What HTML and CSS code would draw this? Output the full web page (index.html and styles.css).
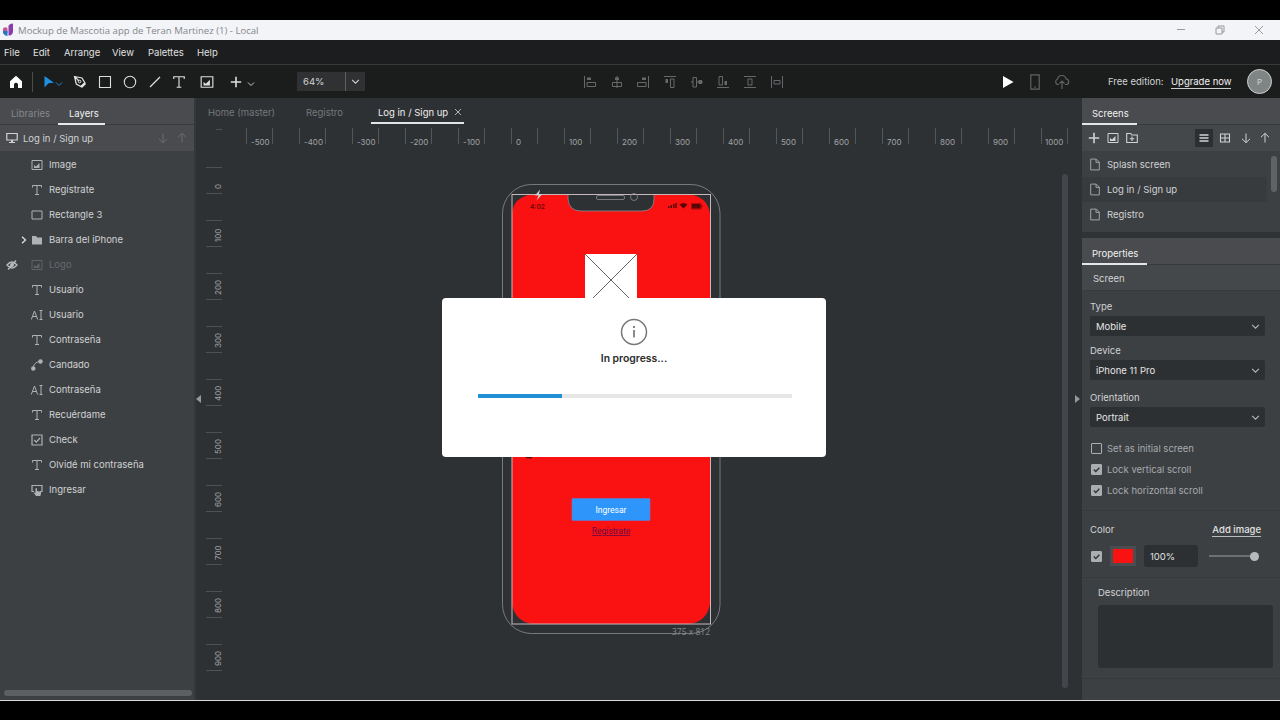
FILE: index.html
```
<!DOCTYPE html>
<html lang="en">
<head>
    <meta charset="UTF-8">
    <meta name="viewport" content="width=device-width, initial-scale=1.0">
    <title>Mockup de Mascotia app de Teran Martinez (1) - Local</title>
    <link rel="stylesheet" href="styles.css">
</head>
<body>
<svg class="sprite" aria-hidden="true">
    <symbol id="i-image" viewBox="0 0 12 12"><path d="M1 1.5h10v9H1z" fill="none" stroke="currentColor"/><path d="M3 9V6l2 1.5L8.500 4V9z" fill="currentColor"/></symbol>
    <symbol id="i-text" viewBox="0 0 12 12"><path d="M1.500 3.500V1.500h9v2M6 1.500v9M4 10.500h4" fill="none" stroke="currentColor"/></symbol>
    <symbol id="i-rect" viewBox="0 0 12 12"><path d="M1 2h10v8H1z" fill="none" stroke="currentColor"/></symbol>
    <symbol id="i-folder" viewBox="0 0 12 12"><path d="M1 2h4l1.200 1.500H11V10.500H1z" fill="currentColor"/></symbol>
    <symbol id="i-input" viewBox="0 0 12 12"><path d="M.3 10.500L3.500 2 6.700 10.500M1.500 7.500h4M8.500 1.500h3M10 1.500v9M8.500 10.500h3" fill="none" stroke="currentColor"/></symbol>
    <symbol id="i-path" viewBox="0 0 12 12"><path d="M2.500 9C2.500 5 5 3 9 2.500" fill="none" stroke="currentColor"/><circle cx="2.300" cy="9.500" r="2.200" fill="currentColor"/><circle cx="9.500" cy="2.500" r="2.200" fill="currentColor"/></symbol>
    <symbol id="i-check" viewBox="0 0 12 12"><path d="M1 1h10v10H1zM3.300 6l2 2.200L9 4" fill="none" stroke="currentColor" stroke-width="1.200"/></symbol>
    <symbol id="i-button" viewBox="0 0 12 12"><path d="M3 7.500H1v-6h10v6H9" fill="none" stroke="currentColor" stroke-width="1.200"/><path d="M4.500 4.500q1-1 1.500 0V7l4 .8v2L9.300 12H5L2.500 8.500l2 .3z" fill="currentColor"/></symbol>
    <symbol id="i-down" viewBox="0 0 12 12"><path d="M6 1.500v9M2 6.800l4 3.900 4-3.900" fill="none" stroke="currentColor"/></symbol>
    <symbol id="i-up" viewBox="0 0 12 12"><path d="M6 10.500v-9M2 5.200l4-3.900 4 3.900" fill="none" stroke="currentColor"/></symbol>
    <symbol id="i-chevron" viewBox="0 0 8 8"><path d="M1 2.500l3 3 3-3" fill="none" stroke="currentColor" stroke-width=".9"/></symbol>
    <symbol id="i-plus" viewBox="0 0 12 12"><path d="M6 .8v10.400M.8 6h10.400" fill="none" stroke="currentColor" stroke-width="1.600"/></symbol>
    <symbol id="i-page" viewBox="0 0 12 12"><path d="M1.700.6h5.600l3 3v7.800H1.700zM7 .6v3.300h3.300" fill="none" stroke="currentColor"/></symbol>
    <symbol id="i-close" viewBox="0 0 8 8"><path d="M1 1l6 6M7 1L1 7" fill="none" stroke="currentColor"/></symbol>
</svg>

<div class="app">
    <header class="titlebar">
        <svg class="logo" viewBox="0 0 12 14"><path d="M6.500 2.500Q8 .5 11 .5V9q-1 4-4.500 3.500z" fill="#8a3cae"/><path d="M1 5.500q3-2.500 4.500 0V10H1z" fill="#c05a8c"/><path d="M1 8h4.500v5Q1 12 1 9z" fill="#2476c4"/></svg>
        <span class="window-title">Mockup de Mascotia app de Teran Martinez (1) - Local</span>
        <div class="window-buttons">
            <svg viewBox="0 0 10 10"><path d="M1 4.500h8"/></svg>
            <svg viewBox="0 0 10 10"><path d="M1 3h6v6H1zM3 3V1h6v6H7"/></svg>
            <svg viewBox="0 0 10 10"><path d="M1 1l8 8M9 1L1 9"/></svg>
        </div>
    </header>

    <nav class="menubar">
        <span class="m-file">File</span><span class="m-edit">Edit</span><span class="m-arrange">Arrange</span><span class="m-view">View</span><span class="m-palettes">Palettes</span><span class="m-help">Help</span>
    </nav>

    <div class="toolbar">
        <div class="tools">
            <svg class="tool home" viewBox="0 0 14 14"><path d="M7 .8l6 5.400V13H9V9Q7 6.500 5 9v4H1V6.200z" fill="#fff"/></svg>
            <i class="separator"></i>
            <svg class="tool pointer" viewBox="0 0 12 14"><path d="M1.500 1L11 7.800 5.500 8.300 1.500 12.500z" fill="#1e90e0"/></svg>
            <svg class="caret blue"><use href="#i-chevron"/></svg>
            <svg class="tool pen" viewBox="0 0 14 14"><path d="M1.500 1.500L9 3l2.800 4.700-4 3.800L3.300 9zM1.500 1.500L6 6M12.700 8.500l-4.200 4" fill="none" stroke="#e4e4e4" stroke-width="1.200"/><circle cx="6.600" cy="6.500" r="1.300" fill="none" stroke="#e4e4e4"/></svg>
            <svg class="tool square" viewBox="0 0 14 14"><path d="M1.500 1.500h11v11h-11z" fill="none" stroke="#ddd" stroke-width="1.100"/></svg>
            <svg class="tool circle" viewBox="0 0 14 14"><circle cx="7" cy="7" r="5.700" fill="none" stroke="#ddd" stroke-width="1.100"/></svg>
            <svg class="tool line" viewBox="0 0 14 14"><path d="M2 12L12 2" stroke="#ddd" stroke-width="1.200"/></svg>
            <svg class="tool type"><use href="#i-text"/></svg>
            <svg class="tool picture"><use href="#i-image"/></svg>
            <svg class="tool add"><use href="#i-plus"/></svg>
            <svg class="caret"><use href="#i-chevron"/></svg>
        </div>
        <div class="zoom"><span>64%</span><b><svg><use href="#i-chevron"/></svg></b></div>
        <div class="align">
            <svg viewBox="0 0 14 14"><path d="M1.500 1v12M4 7.500h8.500v4H4z"/><path class="solid" d="M4 2.500h4v2.500H4z"/></svg>
            <svg viewBox="0 0 14 14"><path d="M7 1v12M2.500 7.500h9v4h-9z"/><path class="solid" d="M5 2.500h4v2.500H5z"/></svg>
            <svg viewBox="0 0 14 14"><path d="M12.500 1v12M1.500 7.500H10v4H1.500z"/><path class="solid" d="M6 2.500h4v2.500H6z"/></svg>
            <svg viewBox="0 0 14 14"><path d="M1 1.500h12M7.500 4h3.500v8.500H7.500z"/><path class="solid" d="M2.500 4H5v4H2.500z"/></svg>
            <svg viewBox="0 0 14 14"><path d="M1 7h2M6.500 7h6.500M3 2.500h3.500v9.500H3z"/><path class="solid" d="M8.500 5H12v4H8.500z"/></svg>
            <svg viewBox="0 0 14 14"><path d="M1 12.500h12M3 1.500h3.500V10H3z"/><path class="solid" d="M8.500 6H11v4H8.500z"/></svg>
            <svg viewBox="0 0 14 14"><path d="M1 1.500h12M1 12.500h12M5 4h4v6H5z"/></svg>
            <svg viewBox="0 0 14 14"><path d="M1.500 1v12M12.500 1v12M4 5.500h6v3.500H4z"/></svg>
        </div>
        <div class="actions">
            <svg class="play" viewBox="0 0 12 14"><path d="M1 1l10.500 6L1 13z" fill="#fff"/></svg>
            <svg class="device" viewBox="0 0 10 16"><path d="M.8.8h8.400v14.400H.8zM4 13h2" /></svg>
            <svg class="cloud" viewBox="0 0 16 16"><path d="M5 10.500H3.500a3 3 0 0 1 0-5.500C4.500.5 11 .3 12 4.800a2.900 2.900 0 0 1 .5 5.700H11M8 15V7M5.500 9.500L8 7l2.500 2.500"/></svg>
            <span class="edition">Free edition:</span>
            <a class="upgrade">Upgrade now</a>
            <span class="avatar">P</span>
        </div>
    </div>

    <main class="workspace">
        <aside class="layers">
            <div class="tabs">
                <span class="tab-lib">Libraries</span>
                <span class="tab-layers active">Layers</span>
            </div>
            <div class="layers-head">
                <svg class="monitor" viewBox="0 0 12 12"><path d="M.8 1.500h10.400v6.500H.8z" fill="none" stroke="currentColor" stroke-width="1.200"/><path d="M5 8h2v2h2v1H3v-1h2z" fill="currentColor"/></svg>
                <span>Log in / Sign up</span>
                <svg class="order"><use href="#i-down"/></svg>
                <svg class="order"><use href="#i-up"/></svg>
            </div>
            <ul class="layer-list">
                <li><svg><use href="#i-image"/></svg>Image</li>
                <li><svg><use href="#i-text"/></svg>Regístrate</li>
                <li><svg><use href="#i-rect"/></svg>Rectangle 3</li>
                <li class="group"><svg class="expand" viewBox="0 0 8 8"><path d="M2 .8l3.500 3.200L2 7.200" fill="none" stroke="#ddd" stroke-width="1.300"/></svg><svg><use href="#i-folder"/></svg>Barra del iPhone</li>
                <li class="hidden-layer"><svg class="eye" viewBox="0 0 12 12"><path d="M1 6q5-6 10 0-5 6-10 0zM2 10.500l8-9" fill="none" stroke="currentColor" stroke-width="1.300"/><circle cx="6" cy="6" r="2" fill="currentColor"/></svg><svg><use href="#i-image"/></svg>Logo</li>
                <li><svg><use href="#i-text"/></svg>Usuario</li>
                <li><svg><use href="#i-input"/></svg>Usuario</li>
                <li><svg><use href="#i-text"/></svg>Contraseña</li>
                <li><svg><use href="#i-path"/></svg>Candado</li>
                <li><svg><use href="#i-input"/></svg>Contraseña</li>
                <li><svg><use href="#i-text"/></svg>Recuérdame</li>
                <li><svg><use href="#i-check"/></svg>Check</li>
                <li><svg><use href="#i-text"/></svg>Olvidé mi contraseña</li>
                <li><svg><use href="#i-button"/></svg>Ingresar</li>
            </ul>
            <div class="h-scroll"></div>
        </aside>

        <section class="editor">
            <div class="screen-tabs">
                <span class="st-home">Home (master)</span>
                <span class="st-registro">Registro</span>
                <span class="st-login">Log in / Sign up <svg><use href="#i-close"/></svg></span>
            </div>
            <div class="ruler-x">
                <span>-500</span><span>-400</span><span>-300</span><span>-200</span><span>-100</span><span>0</span><span>100</span><span>200</span><span>300</span><span>400</span><span>500</span><span>600</span><span>700</span><span>800</span><span>900</span><span>1000</span>
            </div>
            <div class="ruler-y">
                <span>0</span><span>100</span><span>200</span><span>300</span><span>400</span><span>500</span><span>600</span><span>700</span><span>800</span><span>900</span>
            </div>
            <i class="fold fold-left"></i>
            <i class="fold fold-right"></i>
            <i class="v-scroll"></i>

            <svg class="phone" width="220" height="456" viewBox="0 0 220 456">
                <rect class="bezel" x=".5" y=".5" width="217.500" height="449" rx="29"/>
                <path class="screen" d="M10 30Q11 13 31 10H66V15Q67 27 79 27H140Q152 27 152 15V10H187Q206 13 208 30V420Q205 437 188 440H30Q13 437 10 420z"/>
                <path class="bezel" d="M66 10V15Q67 27 79 27H140Q152 27 152 15V10"/>
                <rect class="frame" x="10" y="10.500" width="198.500" height="429.500"/>
                <rect class="bezel" x="94.500" y="11.500" width="28" height="4" rx="1.500"/>
                <circle class="bezel" cx="132" cy="13" r="3.500"/>
                <path d="M38 5.500l-5 6h3.500l-2 5 6-6.500h-3.500z" fill="#c9d0d0"/>
                <text class="clock" x="28" y="25">4:02</text>
                <path d="M166 24v-2h1.500v2zM168.500 24v-3h1.500v3zM171 24v-4h1.500v4zM173.300 24v-5h1.500v5zM181.500 24.500l-4-4q4-3 8 0zM190 20h8.500v4.500H190zM199.300 21.300h1v2h-1z" fill="#5a0505"/>
                <path d="M189.500 19.500h9.500v5.500h-9.500z" fill="none" stroke="#7a0808" stroke-width=".6"/>
                <path d="M83 70h52v60H83z" fill="#fff"/>
                <path d="M83 70l52 52M135 70l-52 52" stroke="#666" stroke-width="1"/>
                <path d="M24 272h6v2.300h-6z" fill="#5a0505"/>
                <rect x="70" y="314.500" width="78" height="22" rx="1" fill="#2e96fb" stroke="#6080d8" stroke-width=".6"/>
                <text class="enter" x="109" y="329">Ingresar</text>
                <text class="register" x="109" y="350">Regístrate</text>
                <text class="dims" x="208" y="451">375 x 812</text>
            </svg>
        </section>

        <aside class="side">
            <div class="tabs"><span class="tab-screens active">Screens</span></div>
            <div class="screen-tools">
                <svg><use href="#i-plus"/></svg>
                <svg><use href="#i-image"/></svg>
                <svg viewBox="0 0 12 12"><path d="M.7 1.500h4l1.200 1.500h5.400v7.500H.7zM6 4.500v4.500M3.800 6.700h4.400" fill="none" stroke="currentColor" stroke-width="1.100"/></svg>
                <span class="list-view"><svg viewBox="0 0 12 12"><path d="M1.500 3h9M1.500 6h9M1.500 9h9" stroke="currentColor" stroke-width="1.300"/></svg></span>
                <svg class="grid-view" viewBox="0 0 12 12"><path d="M1.500 2h9v8h-9zM6 2v8M1.500 6h9" fill="none" stroke="currentColor" stroke-width="1.100"/></svg>
                <svg class="sort"><use href="#i-down"/></svg>
                <svg><use href="#i-up"/></svg>
            </div>
            <div class="screens">
                <ul>
                    <li><svg><use href="#i-page"/></svg>Splash screen</li>
                    <li class="selected"><svg><use href="#i-page"/></svg>Log in / Sign up</li>
                    <li><svg><use href="#i-page"/></svg>Registro</li>
                </ul>
                <i class="thumb"></i>
            </div>

            <div class="tabs props-tabs"><span class="tab-props active">Properties</span></div>
            <div class="props-head">Screen</div>
            <div class="props">
                <label>Type</label>
                <div class="select">Mobile<svg><use href="#i-chevron"/></svg></div>
                <label>Device</label>
                <div class="select">iPhone 11 Pro<svg><use href="#i-chevron"/></svg></div>
                <label class="spaced">Orientation</label>
                <div class="select">Portrait<svg><use href="#i-chevron"/></svg></div>
                <div class="checks">
                    <div><i class="box"></i>Set as initial screen</div>
                    <div><i class="box on"><svg viewBox="0 0 10 10"><path d="M2 5l2.200 2.300L8.200 3"/></svg></i>Lock vertical scroll</div>
                    <div><i class="box on"><svg viewBox="0 0 10 10"><path d="M2 5l2.200 2.300L8.200 3"/></svg></i>Lock horizontal scroll</div>
                </div>
            </div>
            <div class="color">
                <div class="color-head"><span>Color</span><a>Add image</a></div>
                <div class="color-row">
                    <i class="box on"><svg viewBox="0 0 10 10"><path d="M2 5l2.200 2.300L8.200 3"/></svg></i>
                    <i class="swatch"></i>
                    <span class="opacity">100%</span>
                    <span class="slider"><i></i></span>
                </div>
            </div>
            <div class="description">
                <label>Description</label>
                <div class="textarea"></div>
            </div>
        </aside>
    </main>

    <div class="dialog">
        <svg class="info" viewBox="0 0 28 28"><circle cx="14" cy="14" r="12.500" fill="none" stroke="#777" stroke-width="1.500"/><path d="M14 12v7.500" stroke="#666" stroke-width="1.500"/><circle cx="14" cy="9" r="1.100" fill="#666"/></svg>
        <p>In progress...</p>
        <div class="progress"><div class="bar"></div></div>
    </div>
</div>
</body>
</html>
```
FILE: styles.css
```
:root {
    --panel: #3d4043;
    --panel-head: #494b4f;
    --canvas: #2e3134;
    --field: #2d3032;
    --text: #d0d2d3;
    --line: #37393c;
}

* {
    margin: 0;
    padding: 0;
    box-sizing: border-box;
}

body {
    background: #000;
    color: var(--text);
    font-family: Inter, "Liberation Sans", sans-serif;
    font-size: 9.5px;
    overflow: hidden;
    padding-top: 20px;
    height: 720px;
}

ul {
    list-style: none;
}

svg {
    display: block;
    flex: none;
}

.sprite {
    display: none;
}

.app {
    height: 681px;
    position: relative;
    display: flex;
    flex-direction: column;
    border-bottom: 1px solid #d9dcdc;
    white-space: nowrap;
}

/* window chrome */
.titlebar {
    height: 20px;
    display: flex;
    align-items: center;
    background: #f3f4f8;
    color: #85878b;
    padding: 0 16px 0 2px;
}

.logo {
    width: 12px;
    height: 14px;
    margin-right: 4px;
}

.window-title {
    font: 9.6px "Open Sans", sans-serif;
}

.window-buttons {
    margin-left: auto;
    display: flex;
    gap: 29px;
}

.window-buttons svg {
    width: 10px;
    height: 10px;
    fill: none;
    stroke: #8c8e91;
    stroke-width: .9;
}

.menubar {
    height: 25px;
    display: flex;
    align-items: center;
    background: #1c1d1e;
    border-bottom: 1px solid #37383a;
    padding: 1px 0 0 4px;
    color: #e0e0e0;
}

.m-file { width: 29px; }
.m-edit { width: 31px; }
.m-arrange { width: 48px; }
.m-view { width: 36px; }
.m-palettes { width: 49px; }

.toolbar {
    height: 33px;
    display: flex;
    align-items: center;
    background: #1b1c1c;
}

.tools {
    display: flex;
    align-items: center;
    width: 297px;
    padding-left: 9px;
    color: #ddd;
}

.tool {
    width: 14px;
    height: 14px;
}

.separator {
    width: 1px;
    height: 20px;
    background: #4b4c4d;
    margin: 0 10px 0 9px;
}

.pointer { width: 12px; }

.caret {
    width: 8px;
    height: 8px;
    margin-top: 5px;
}

.caret.blue { color: #1e90e0; }

.pen { margin-left: 10px; }
.square { margin-left: 11px; }
.circle { margin-left: 11px; }
.line { margin-left: 11px; }
.type { margin-left: 10px; }
.picture { margin-left: 14px; }
.add { width: 12px; margin: 0 5px 0 16px; }

.zoom {
    display: flex;
    width: 68px;
    height: 19px;
    background: #2f3133;
    align-items: center;
    color: #d5d5d5;
}

.zoom span {
    width: 48px;
    padding-left: 6px;
}

.zoom b {
    display: flex;
    width: 20px;
    height: 19px;
    align-items: center;
    justify-content: center;
    border-left: 1px solid #5d5f60;
}

.zoom svg {
    width: 9px;
    height: 9px;
}

.align {
    display: flex;
    gap: 12.700px;
    margin-left: 218px;
}

.align svg {
    width: 14px;
    height: 14px;
    fill: none;
    stroke: #66686a;
    stroke-width: 1;
}

.align .solid {
    fill: #66686a;
    stroke: none;
}

.actions {
    display: flex;
    align-items: center;
    margin-left: auto;
    padding-right: 8px;
}

.play {
    width: 12px;
    height: 14px;
}

.device, .cloud {
    fill: none;
    stroke: #606264;
    stroke-width: 1.200;
}

.device {
    width: 10px;
    height: 16px;
    margin-left: 16px;
}

.cloud {
    width: 16px;
    height: 16px;
    margin-left: 14px;
}

.edition {
    width: 63px;
    margin-left: 38px;
}

.upgrade {
    color: #f3f3f3;
    width: 60px;
    border-bottom: 1px solid #ccc;
    line-height: 13px;
    padding-top: 1px;
}

.avatar {
    display: flex;
    align-items: center;
    justify-content: center;
    width: 25px;
    height: 25px;
    margin-left: 16px;
    border: 1px solid #cfd1d1;
    border-radius: 50%;
    background: #7f8484;
    font-size: 8px;
}

.workspace {
    flex: 1;
    display: flex;
    min-height: 0;
}

/* panels */
.tabs {
    height: 27px;
    display: flex;
    background: var(--panel-head);
    border-bottom: 1px solid var(--line);
    color: #85888b;
}

.tabs span {
    height: 27px;
    line-height: 32px;
}

.tabs .active {
    color: #f2f2f2;
    border-bottom: 2px solid #e4e7e9;
}

.layers {
    width: 196px;
    background: var(--panel);
    border-right: 2px solid #35383b;
    display: flex;
    flex-direction: column;
}

.tab-lib { width: 58px; padding-left: 11px; }
.tab-layers { width: 47px; padding-left: 11px; }
.tab-screens { width: 55px; padding-left: 10px; }
.tab-props { width: 65px; padding-left: 10px; }

.layers-head {
    height: 26px;
    display: flex;
    align-items: center;
    background: var(--panel-head);
    padding: 0 6px;
}

.layers-head span {
    flex: 1;
    padding-left: 5px;
}

.monitor, .order {
    width: 12px;
    height: 12px;
}

.order {
    color: #6b6e71;
    margin-left: 7px;
}

.layer-list li {
    height: 25px;
    display: flex;
    align-items: center;
    padding: 2px 0 0 31px;
}

.layer-list svg {
    width: 12px;
    height: 12px;
    margin-right: 6px;
    color: #aeb2b3;
}

.layer-list .group { padding-left: 20px; }

.layer-list .expand {
    width: 8px;
    height: 8px;
    margin-right: 3px;
}

.layer-list .hidden-layer {
    padding-left: 6px;
    color: #66696c;
}

.layer-list .hidden-layer svg { color: #606366; }

.layer-list .hidden-layer .eye {
    margin-right: 13px;
    color: #b9bcbd;
}

.h-scroll {
    height: 6px;
    border-radius: 3px;
    background: #5d6063;
    margin: auto 2px 4px 4px;
}

.editor {
    flex: 1;
    position: relative;
    background: var(--canvas);
}

.screen-tabs {
    height: 26px;
    display: flex;
    color: #75787b;
    line-height: 29px;
    padding-left: 12px;
}

.st-home { width: 98px; }
.st-registro { width: 65px; }

.st-login {
    width: 93px;
    padding: 4px 0 0 7px;
    color: #efefef;
    border-bottom: 2px solid #e2e4e5;
    display: flex;
    align-items: center;
}

.st-login svg {
    width: 8px;
    height: 8px;
    margin-left: 6px;
    color: #b0b3b5;
}

/* one span covers 100 units: a labelled tick and a half-way tick */
.ruler-x {
    height: 20px;
    margin: 4px 0 0 50px;
    display: flex;
    font-size: 8px;
    color: #a0a3a5;
}

.ruler-x span {
    width: 53px;
    height: 20px;
    padding: 9px 0 0 5px;
    background: linear-gradient(#53575a, #53575a) 0 0 / 1px 16px no-repeat,
                linear-gradient(#53575a, #53575a) 26px 0 / 1px 16px no-repeat;
}

.ruler-x span:last-child {
    width: 28px;
    padding-left: 4px;
}

.ruler-y {
    width: 16px;
    margin: -19px 0 0 10px;
    padding-top: 12px;
    display: flex;
    flex-direction: column;
    font-size: 8px;
    color: #a0a3a5;
    background: linear-gradient(#4e5255, #4e5255) 100% 0 / 6px 1px no-repeat;
}

.ruler-y span {
    height: 53px;
    width: 16px;
    writing-mode: vertical-lr;
    transform: rotate(180deg);
    padding-top: 5px;
    line-height: 8px;
    background: linear-gradient(#4e5255, #4e5255) 0 0 / 16px 1px no-repeat,
                linear-gradient(#4e5255, #4e5255) 0 26px / 16px 1px no-repeat;
}

.fold {
    position: absolute;
    top: 297px;
    border: 4px solid transparent;
}

.fold-left {
    left: -4px;
    border-right: 5px solid #94999b;
}

.fold-right {
    right: 2px;
    border-left: 5px solid #94999b;
    border-right: 0;
}

.v-scroll {
    position: absolute;
    top: 76px;
    right: 14px;
    width: 6px;
    height: 514px;
    border-radius: 3px;
    background: #42464a;
}

/* device on the canvas */
.phone {
    position: absolute;
    left: 306px;
    top: 86px;
}

.bezel {
    fill: none;
    stroke: #888d90;
    stroke-width: .8;
}

.screen { fill: #fa1111; }

.frame {
    fill: none;
    stroke: #c8b9b9;
    stroke-width: 1;
}

.clock {
    font-size: 6.5px;
    font-weight: 600;
    fill: #6c0808;
}

.enter, .register {
    font-family: Roboto, sans-serif;
    font-size: 8.500px;
    text-anchor: middle;
    fill: #fff;
}

.register {
    fill: #6b0a45;
    text-decoration: underline;
}

.dims {
    font: 8.5px "Open Sans", sans-serif;
    text-anchor: end;
    fill: #85898c;
}

/* right column */
.side {
    width: 198px;
    background: var(--panel);
    display: flex;
    flex-direction: column;
}

.screen-tools {
    height: 26px;
    display: flex;
    align-items: center;
    background: #45484b;
    padding: 0 9px 0 6px;
    gap: 7px;
}

.screen-tools svg {
    width: 12px;
    height: 12px;
}

.list-view {
    width: 18px;
    height: 18px;
    display: flex;
    align-items: center;
    justify-content: center;
    background: #2c2f32;
    margin-left: auto;
}

.grid-view { margin-left: -1px; }
.screen-tools .sort { margin-left: 2px; }

.screens {
    height: 87px;
    display: flex;
    border-bottom: 6px solid #303336;
    padding-top: 1px;
}

.screens ul { width: 185px; }

.screens li {
    height: 25px;
    display: flex;
    align-items: center;
    padding-left: 7px;
}

.screens .selected { background: #383b3e; }

.screens svg {
    width: 12px;
    height: 13px;
    margin-right: 6px;
    color: #9fa3a5;
}

.thumb {
    width: 6px;
    height: 36px;
    border-radius: 3px;
    background: #606366;
    margin: 4px 0 0 4px;
}

.props-head {
    height: 26px;
    line-height: 28px;
    padding-left: 11px;
    background: #45484b;
    border-bottom: 1px solid #393c3f;
}

.props {
    padding: 7px 15px 0 8px;
    height: 220px;
    border-bottom: 1px solid var(--line);
}

.props label {
    display: block;
    height: 18px;
    line-height: 18px;
}

.props .select + label { margin-top: 6px; }
.props .select + label.spaced { margin-top: 9px; }

.select {
    height: 20px;
    display: flex;
    align-items: center;
    justify-content: space-between;
    padding: 0 5px 0 6px;
    background: var(--field);
    border-radius: 2px;
    color: #e6e6e6;
}

.select svg {
    width: 9px;
    height: 9px;
    color: #b9bcbd;
}

.checks {
    padding-top: 11px;
    color: #a7aaac;
}

.checks div {
    height: 21px;
    display: flex;
    align-items: center;
    gap: 5px;
    padding-left: 1px;
}

.box {
    width: 11px;
    height: 11px;
    border: 1px solid #aaaeb0;
    border-radius: 1px;
}

.box.on { background: #aaaeb0; }

.box svg {
    width: 9px;
    height: 9px;
    fill: none;
    stroke: #303336;
    stroke-width: 1.500;
}

.color {
    height: 67px;
    padding: 12px 15px 0 8px;
    border-bottom: 1px solid var(--line);
}

.color-head {
    display: flex;
    justify-content: space-between;
    height: 22px;
    line-height: 13px;
}

.color-head a {
    height: 14px;
    margin-right: 4px;
    border-bottom: 1px solid #bbb;
    color: #e3e3e3;
    font-weight: 500;
}

.color-row {
    display: flex;
    align-items: center;
    padding-left: 1px;
}

.swatch {
    width: 26px;
    height: 20px;
    margin: 0 8px;
    background: #fa1111;
    border: 3px solid #4b4e50;
}

.opacity {
    width: 54px;
    height: 22px;
    line-height: 23px;
    padding-left: 6px;
    border-radius: 3px;
    background: var(--field);
    color: #e0e0e0;
}

.slider {
    width: 50px;
    height: 2px;
    margin-left: 11px;
    background: #6c7072;
    display: flex;
    align-items: center;
    justify-content: flex-end;
}

.slider i {
    width: 9px;
    height: 9px;
    flex: none;
    border-radius: 50%;
    background: #b7babb;
}

.description {
    height: 101px;
    padding: 8px 7px 0 16px;
    border-bottom: 1px solid #35383a;
}

.description label {
    display: block;
    height: 19px;
    line-height: 14px;
}

.textarea {
    height: 63px;
    border-radius: 3px;
    background: var(--field);
}

/* modal */
.dialog {
    position: absolute;
    left: 442px;
    top: 278px;
    width: 384px;
    height: 159px;
    padding: 20px 35px 0 35px;
    background: #fff;
    border-radius: 4px;
    display: flex;
    flex-direction: column;
    align-items: center;
    color: #2c2c2c;
}

.info {
    width: 28px;
    height: 28px;
}

.dialog p {
    font-size: 10.400px;
    font-weight: 600;
    line-height: 14px;
    margin-top: 6px;
}

.progress {
    width: 314px;
    height: 4px;
    margin: 28px -1px 0 0;
    background: #e6e6e6;
}

.bar {
    width: 84px;
    height: 4px;
    background: #2290d4;
}
```
